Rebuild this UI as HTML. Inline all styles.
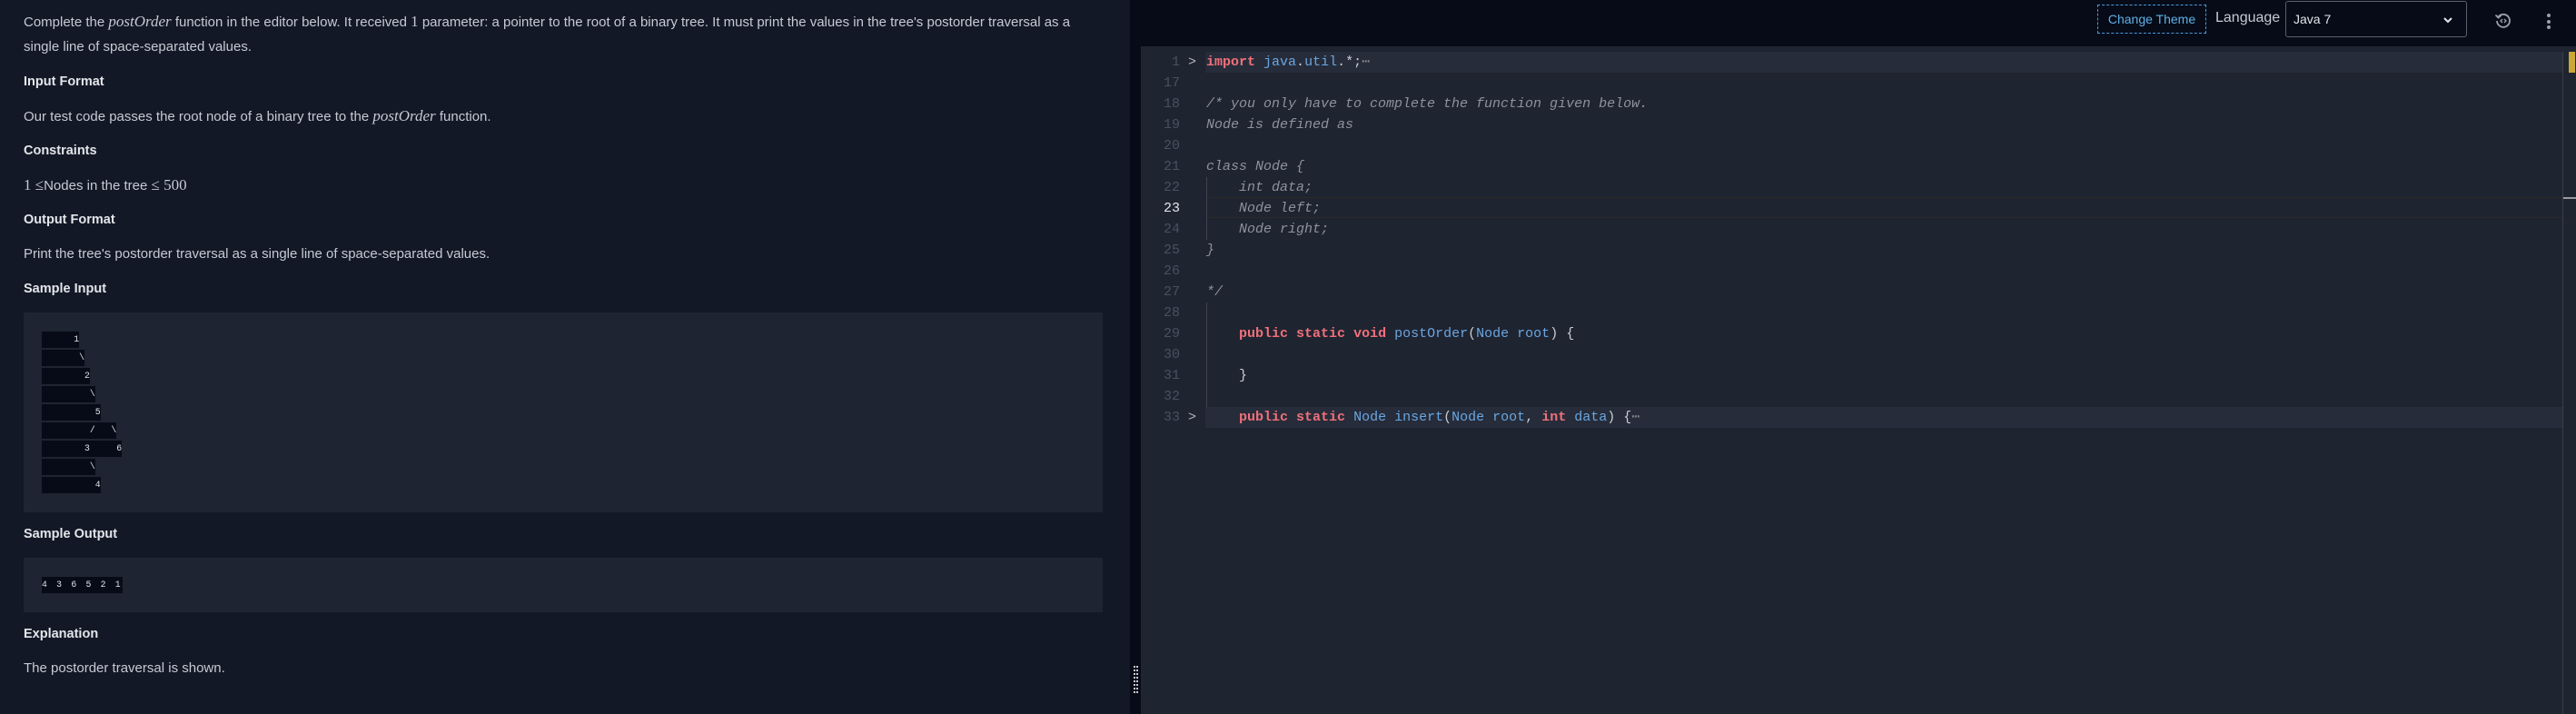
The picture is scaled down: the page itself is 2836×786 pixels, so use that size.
<!DOCTYPE html>
<html><head><meta charset="utf-8"><style>
*{margin:0;padding:0;box-sizing:border-box}
body{width:2836px;height:786px;background:#121826;position:relative;overflow:hidden;font-family:"Liberation Sans",sans-serif}
#left{position:absolute;left:0;top:0;width:1244px;height:786px;background:#121826;color:#c5cad3;font-size:15px}
.t{position:absolute;left:26px;white-space:nowrap;line-height:20px}
.h{font-weight:bold;color:#e3e6ea;font-size:14.5px}
.m{font-family:"Liberation Serif",serif;font-style:italic;font-size:17px}
.box{position:absolute;left:26px;width:1188px;background:#1e2431}
.pl{position:absolute;left:46px;height:18px;background:#060b17;color:#dfe2e8;font-family:"Liberation Mono",monospace;font-size:9.8px;line-height:18px;white-space:pre}
#gut{position:absolute;left:1244px;top:0;width:12px;height:786px;background:#060b17}
#top{position:absolute;left:1256px;top:0;width:1580px;height:51px;background:#060b17}
#ed{position:absolute;left:1256px;top:51px;width:1580px;height:735px;background:#1f2431;font-family:"Liberation Mono",monospace;font-size:15px}
.r{position:absolute;left:0;width:1565px;height:23px;line-height:23px;white-space:pre}
.n{position:absolute;left:0;width:43px;text-align:right;color:#4a5060}
.c{position:absolute;left:72px;color:#c9ccd2}
.k{color:#f0707a;font-weight:bold}
.b{color:#6aa6e0}
.cm{color:#8d929c;font-style:italic}
</style></head><body>
<div id="left">
<div class="t" style="top:14px">Complete the <span class="m">postOrder</span> function in the editor below. It received <span class="m" style="font-style:normal">1</span> parameter: a pointer to the root of a binary tree. It must print the values in the tree's postorder traversal as a</div>
<div class="t" style="top:42px">single line of space-separated values.</div>
<div class="t h" style="top:80px">Input Format</div>
<div class="t" style="top:118px">Our test code passes the root node of a binary tree to the <span class="m">postOrder</span> function.</div>
<div class="t h" style="top:156px">Constraints</div>
<div class="t" style="top:194px"><span class="m" style="font-style:normal">1 ≤</span>Nodes in the tree <span class="m" style="font-style:normal">≤ 500</span></div>
<div class="t h" style="top:232px">Output Format</div>
<div class="t" style="top:270px">Print the tree's postorder traversal as a single line of space-separated values.</div>
<div class="t h" style="top:308px">Sample Input</div>
<div class="box" style="top:344px;height:220px"></div>
<div class="pl" style="top:365px">      1</div>
<div class="pl" style="top:385px">       \</div>
<div class="pl" style="top:405px">        2</div>
<div class="pl" style="top:425px">         \</div>
<div class="pl" style="top:445px">          5</div>
<div class="pl" style="top:465px">         /   \</div>
<div class="pl" style="top:485px">        3     6</div>
<div class="pl" style="top:505px">         \</div>
<div class="pl" style="top:525px">          4</div>
<div class="t h" style="top:578px">Sample Output</div>
<div class="box" style="top:614px;height:60px"></div>
<div class="pl" style="top:635px;letter-spacing:2.2px">4 3 6 5 2 1</div>
<div class="t h" style="top:688px">Explanation</div>
<div class="t" style="top:726px">The postorder traversal is shown.</div>
</div>
<div id="gut"><svg width="12" height="786" style="position:absolute;left:0;top:0"><g fill="#c9ccd2">
<rect x="4" y="733" width="2" height="2"/><rect x="7" y="733" width="2" height="2"/><rect x="4" y="737" width="2" height="2"/><rect x="7" y="737" width="2" height="2"/><rect x="4" y="741" width="2" height="2"/><rect x="7" y="741" width="2" height="2"/><rect x="4" y="745" width="2" height="2"/><rect x="7" y="745" width="2" height="2"/><rect x="4" y="749" width="2" height="2"/><rect x="7" y="749" width="2" height="2"/><rect x="4" y="753" width="2" height="2"/><rect x="7" y="753" width="2" height="2"/><rect x="4" y="757" width="2" height="2"/><rect x="7" y="757" width="2" height="2"/><rect x="4" y="761" width="2" height="2"/><rect x="7" y="761" width="2" height="2"/></g></svg></div>
<div id="top">
<div style="position:absolute;left:1053px;top:5px;width:120px;height:32px;border:1px dashed #4a9be0;color:#5fb0e8;font-size:14px;line-height:30px;text-align:center">Change Theme</div>
<div style="position:absolute;left:1183px;top:8px;color:#c5cad3;font-size:16px;line-height:24px">Language</div>
<div style="position:absolute;left:1260px;top:1px;width:200px;height:40px;border:1px solid #5a5f6a;border-radius:3px;color:#e3e6ea;font-size:14px;line-height:38px;padding-left:8px">Java 7
<svg width="12" height="8" style="position:absolute;right:14px;top:16px"><path d="M2 2l4 4 4-4" stroke="#e3e6ea" stroke-width="2" fill="none"/></svg></div>
<svg width="20" height="20" style="position:absolute;left:1490px;top:13px"><path d="M4.5 5.5A7 7 0 1 1 3 10" stroke="#9aa0aa" stroke-width="1.8" fill="none"/><path d="M1.5 3.5l3 3 3-2.5" stroke="#9aa0aa" stroke-width="1.8" fill="none"/><path d="M9 8l-2 2 2 2M11 8l2 2-2 2" stroke="#9aa0aa" stroke-width="1.3" fill="none"/></svg>
<svg width="6" height="20" style="position:absolute;left:1547px;top:14px"><circle cx="3" cy="3" r="2" fill="#9aa0aa"/><circle cx="3" cy="10" r="2" fill="#9aa0aa"/><circle cx="3" cy="16" r="2" fill="#9aa0aa"/></svg>
</div>
<div id="ed">
<div style="position:absolute;left:71px;top:6px;width:1494px;height:23px;background:#262c3a"></div>
<div style="position:absolute;left:71px;top:397px;width:1494px;height:23px;background:#262c3a"></div>
<div style="position:absolute;left:72px;top:166px;width:1493px;height:23px;border-top:1px solid #2d2b28;border-bottom:1px solid #2d2b28"></div>
<div style="position:absolute;left:72px;top:144px;width:1px;height:69px;background:#3e4452"></div>
<div style="position:absolute;left:72px;top:282px;width:1px;height:115px;background:#3e4452"></div>
<div style="position:absolute;left:1565px;top:6px;width:1px;height:729px;background:#3a3f4c"></div>
<div style="position:absolute;left:1572px;top:6px;width:7px;height:23px;background:#c9a833"></div>
<div style="position:absolute;left:1566px;top:166px;width:14px;height:2px;background:#9a9a9a"></div>
<div class="r" style="top:6px"><span class="n">1</span><span style="position:absolute;left:52px;color:#b0b4bc">&gt;</span><span class="c"><span class="k">import</span> <span class="b">java</span>.<span class="b">util</span>.*;<span style="color:#888">⋯</span></span></div>
<div class="r" style="top:29px"><span class="n">17</span></div>
<div class="r" style="top:52px"><span class="n">18</span><span class="c cm">/* you only have to complete the function given below.</span></div>
<div class="r" style="top:75px"><span class="n">19</span><span class="c cm">Node is defined as</span></div>
<div class="r" style="top:98px"><span class="n">20</span></div>
<div class="r" style="top:121px"><span class="n">21</span><span class="c cm">class Node {</span></div>
<div class="r" style="top:144px"><span class="n">22</span><span class="c cm">    int data;</span></div>
<div class="r" style="top:167px"><span class="n" style="color:#e3e6ea">23</span><span class="c cm">    Node left;</span></div>
<div class="r" style="top:190px"><span class="n">24</span><span class="c cm">    Node right;</span></div>
<div class="r" style="top:213px"><span class="n">25</span><span class="c cm">}</span></div>
<div class="r" style="top:236px"><span class="n">26</span></div>
<div class="r" style="top:259px"><span class="n">27</span><span class="c cm">*/</span></div>
<div class="r" style="top:282px"><span class="n">28</span></div>
<div class="r" style="top:305px"><span class="n">29</span><span class="c">    <span class="k">public</span> <span class="k">static</span> <span class="k">void</span> <span class="b">postOrder</span>(<span class="b">Node</span> <span class="b">root</span>) {</span></div>
<div class="r" style="top:328px"><span class="n">30</span></div>
<div class="r" style="top:351px"><span class="n">31</span><span class="c">    }</span></div>
<div class="r" style="top:374px"><span class="n">32</span></div>
<div class="r" style="top:397px"><span class="n">33</span><span style="position:absolute;left:52px;color:#b0b4bc">&gt;</span><span class="c">    <span class="k">public</span> <span class="k">static</span> <span class="b">Node</span> <span class="b">insert</span>(<span class="b">Node</span> <span class="b">root</span>, <span class="k">int</span> <span class="b">data</span>) {<span style="color:#888">⋯</span></span></div>
</div>
</body></html>
